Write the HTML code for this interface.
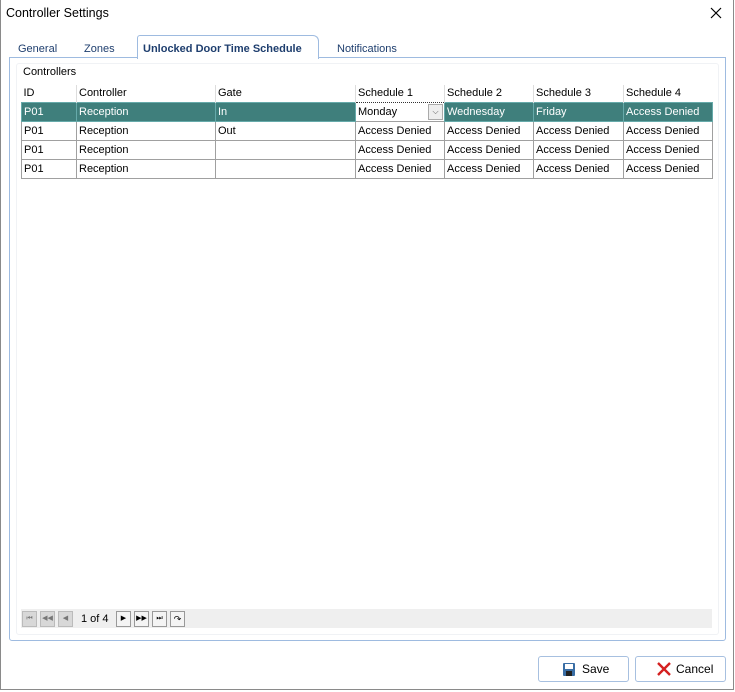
<!DOCTYPE html><html><head><style>
body{margin:0;width:735px;height:692px;background:#fff;font-family:"Liberation Sans",Tahoma,sans-serif;font-size:12px;position:relative;overflow:hidden;color:#000}
.a{position:absolute}
.win{left:0;top:0;width:732px;height:689px;border:1px solid #8a8a8a;border-top:none;background:#fff}
.title{left:6px;top:6px;font-size:12.5px}
.tab{top:43px;color:#1e3e6e;font-size:11px}
.panel{left:9px;top:57px;width:715px;height:582px;border:1px solid #9ebbe0;border-radius:0 0 3px 3px;background:#fff}
.grp{left:16px;top:63px;width:701px;height:570px;border:1px solid #f0f2f5;border-radius:3px}
table{border-collapse:collapse;position:absolute;left:21px;top:85px;font-size:11px;table-layout:fixed}
td{height:18px;padding:0 0 0 2px;border:1px solid #a0a0a0;white-space:nowrap;overflow:hidden;line-height:17px}
tr.h td{border:none;border-left:1px solid #ddd;height:17px}
tr.h td:first-child{border-left:none}
tr.s td{background:#3f7f7c;color:#fff;border-color:#6aa}
.pb{top:609px;left:21px;width:691px;height:19px;background:#efefef}
.pg{top:611px;width:13px;height:14px;border:1px solid #bbb;background:#d8d8d8;font-size:7px;text-align:center;line-height:14px;color:#777}
.pg.e{background:#f4f4f4;border-color:#999;color:#000}
.btn{top:656px;width:89px;height:24px;border:1px solid #a7c0e0;border-radius:3px;background:#fff;font-size:12px;line-height:24px}
</style></head><body>
<div class="a win"></div>
<div class="a title">Controller Settings</div>
<svg class="a" style="left:710px;top:7px" width="12" height="12"><path d="M1 1L11 11M11 1L1 11" stroke="#000" stroke-width="1.2"/></svg>
<div class="a panel"></div>
<div class="a" style="left:137px;top:35px;width:180px;height:23px;background:#fff;border:1px solid #9ebbe0;border-bottom:none;border-radius:3px 6px 0 0"></div>
<div class="a tab" style="left:18px">General</div>
<div class="a tab" style="left:84px">Zones</div>
<div class="a tab" style="left:143px;font-weight:bold">Unlocked Door Time Schedule</div>
<div class="a tab" style="left:337px">Notifications</div>
<div class="a grp"></div>
<div class="a" style="left:23px;top:66px;font-size:11px">Controllers</div>
<table>
<colgroup><col style="width:55px"><col style="width:139px"><col style="width:140px"><col style="width:89px"><col style="width:89px"><col style="width:90px"><col style="width:89px"></colgroup>
<tr class="h"><td>ID</td><td>Controller</td><td>Gate</td><td>Schedule 1</td><td>Schedule 2</td><td>Schedule 3</td><td>Schedule 4</td></tr>
<tr class="s"><td>P01</td><td>Reception</td><td>In</td><td style="background:#fff;color:#000;border:1px dotted #333;position:relative">Monday<span style="position:absolute;right:1px;top:1px;width:13px;height:14px;border:1px solid #aaa;background:#eee;font-size:8px;line-height:14px;text-align:center;color:#555">⌵</span></td><td>Wednesday</td><td>Friday</td><td>Access Denied</td></tr>
<tr><td>P01</td><td>Reception</td><td>Out</td><td>Access Denied</td><td>Access Denied</td><td>Access Denied</td><td>Access Denied</td></tr>
<tr><td>P01</td><td>Reception</td><td></td><td>Access Denied</td><td>Access Denied</td><td>Access Denied</td><td>Access Denied</td></tr>
<tr><td>P01</td><td>Reception</td><td></td><td>Access Denied</td><td>Access Denied</td><td>Access Denied</td><td>Access Denied</td></tr>
</table>
<div class="a pb"></div>
<div class="a pg" style="left:22px">⏮</div><div class="a pg" style="left:40px">◀◀</div><div class="a pg" style="left:58px">◀</div>
<div class="a" style="left:81px;top:613px;font-size:11px">1 of 4</div>
<div class="a pg e" style="left:116px">▶</div><div class="a pg e" style="left:134px">▶▶</div><div class="a pg e" style="left:152px">⏭</div><div class="a pg e" style="left:170px;font-size:9px">↷</div>
<div class="a btn" style="left:538px"><span style="position:absolute;left:24px;top:6px;width:12px;height:13px;background:#3a6ea5;border-radius:1px"><span style="position:absolute;left:2px;top:1px;width:8px;height:5px;background:#fff"></span><span style="position:absolute;left:3px;top:8px;width:6px;height:5px;background:#222"></span></span><span style="position:absolute;left:43px">Save</span></div>
<div class="a btn" style="left:635px"><svg style="position:absolute;left:21px;top:5px" width="14" height="14"><path d="M1 1L13 13M13 1L1 13" stroke="#d42020" stroke-width="2.4"/></svg><span style="position:absolute;left:40px">Cancel</span></div>
</body></html>
